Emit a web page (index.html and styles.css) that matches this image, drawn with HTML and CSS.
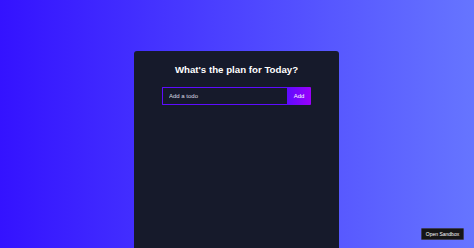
FILE: index.html
```html
<!DOCTYPE html>
<html>
<head>
<meta charset="utf-8">
<link rel="stylesheet" href="styles.css">
</head>
<body>
<div class="todo-app">
  <h1 class="title">What's the plan for Today?</h1>
  <form class="todo-form">
    <input class="todo-input" type="text" placeholder="Add a todo">
    <button class="todo-button" type="button">Add</button>
  </form>
</div>
<button class="sandbox">Open Sandbox</button>
</body>
</html>
```
FILE: styles.css
```css
html, body {
  margin: 0;
  padding: 0;
  height: 100%;
}
body {
  background: linear-gradient(90deg, #3412ff 0%, #6675ff 100%);
  font-family: "Liberation Sans", Arial, sans-serif;
  overflow: hidden;
}
.todo-app {
  width: 205px;
  height: calc(100vh - 51px);
  margin: 51px 0 0 134px;
  background: #161a2b;
  border-radius: 3px 3px 0 0;
  display: flex;
  flex-direction: column;
  align-items: center;
}
.title {
  margin: 13px 0 0;
  color: #fff;
  font-size: 9.7px;
  font-weight: bold;
  line-height: 12px;
}
.todo-form {
  display: flex;
  margin-top: 11px;
}
.todo-input {
  box-sizing: border-box;
  width: 125px;
  height: 18px;
  padding: 0 6px;
  background: transparent;
  border: 1px solid #5d0cff;
  border-right: none;
  border-radius: 1px 0 0 1px;
  color: #fff;
  font-family: "Liberation Sans", Arial, sans-serif;
  font-size: 6px;
  outline: none;
}
.todo-input::placeholder {
  color: #dcdce4;
}
.todo-button {
  box-sizing: border-box;
  width: 24px;
  height: 18px;
  padding: 0;
  border: none;
  border-radius: 0 1px 1px 0;
  background: linear-gradient(90deg, #5d0cff 0%, #9b00fa 100%);
  color: #fff;
  font-family: "Liberation Sans", Arial, sans-serif;
  font-size: 6px;
}
.sandbox {
  position: fixed;
  right: 10px;
  bottom: 8px;
  height: 12px;
  width: 43px;
  padding: 0;
  background: #151515;
  border: 1px solid #3a3a5a;
  border-radius: 1px;
  color: #fff;
  font-family: "Liberation Sans", Arial, sans-serif;
  font-size: 5px;
}
```
